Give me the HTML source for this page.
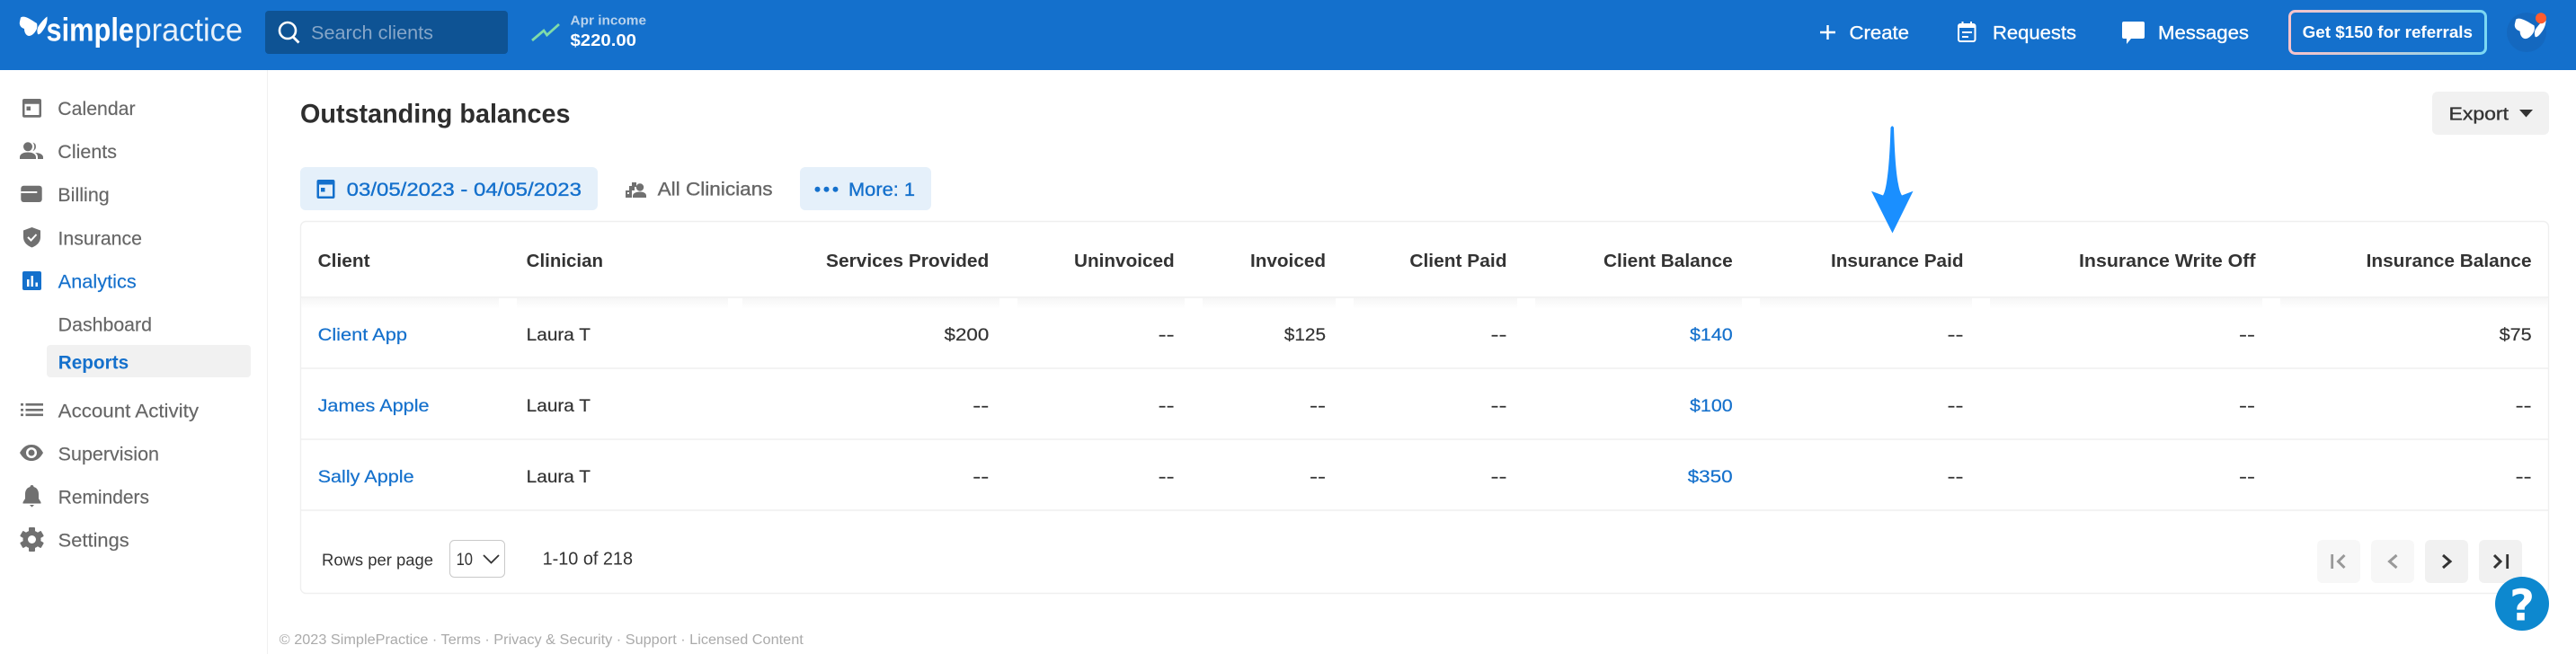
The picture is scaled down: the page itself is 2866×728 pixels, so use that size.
<!DOCTYPE html>
<html lang="en"><head><meta charset="utf-8"><title>Outstanding balances</title>
<style>
html,body{margin:0;padding:0;background:#fff;width:2866px;height:728px;overflow:hidden}
svg{display:block}
text{font-family:"Liberation Sans",Arial,sans-serif;font-size:20px;fill:#333}
.b{font-weight:700}
.m{stroke-width:.35px;paint-order:stroke}
.nav{font-size:21px;fill:#666;stroke:#666;stroke-width:.15px}
.th{font-weight:700;font-size:20px;fill:#333}
.td{font-size:19.5px;fill:#333;stroke:#333;stroke-width:.2px}
.blue{fill:#1470cc;stroke:#1470cc}
.w{fill:#fff;stroke:#fff}
.ic{fill:#707070}
</style></head><body>
<svg xmlns="http://www.w3.org/2000/svg" width="2866" height="728" viewBox="0 0 2866 728">
<defs>
<linearGradient id="ref" x1="0" x2="1" y1="0" y2="0"><stop offset="0" stop-color="#f6c3cb"/><stop offset=".5" stop-color="#c3cdd8"/><stop offset="1" stop-color="#7bd8f3"/></linearGradient>
<linearGradient id="sh" x1="0" x2="0" y1="0" y2="1"><stop offset="0" stop-color="#f6f6f6"/><stop offset="1" stop-color="#fff"/></linearGradient>
</defs>

<!-- top bar -->
<rect width="2866" height="78" fill="#1470cc"/>
<g fill="#fff">
<path d="M23 19.500C27 16.500 34 21.500 41 26C42 30 41 33 39 35.500C36.500 39 33 41 30.500 39.500C28 38 27 35 27 32C23.500 31 21 28 22 24Z"/>
<path d="M42 38C40.500 33 42 30 44 27.500C47 23.500 50 20 52.500 18.500C53 24 51 29.500 48 33.500C46 36.500 43.500 39 42 38Z"/>
</g>
<text x="51.500" y="45.700" textLength="97.500" lengthAdjust="spacingAndGlyphs" class="b" style="font-size:36px;fill:#fff">simple</text>
<text x="149.500" y="45.700" textLength="120.500" lengthAdjust="spacingAndGlyphs" style="font-size:36px;fill:#e8f1fa">practice</text>

<rect x="295" y="12" width="270" height="48" rx="4" fill="#0e5394"/>
<circle cx="320" cy="34" r="9" fill="none" stroke="#fff" stroke-width="2.600"/>
<path d="M326 41L332.500 47.500" stroke="#fff" stroke-width="2.800" fill="none"/>
<text x="346" y="43.500" textLength="136" lengthAdjust="spacingAndGlyphs" style="font-size:21px;fill:#86a6c8">Search clients</text>

<path d="M592 45L605 34L608.500 39L622 27" fill="none" stroke="#7fdca9" stroke-width="2.800"/>
<text x="634.500" y="27.500" textLength="84.500" lengthAdjust="spacingAndGlyphs" class="b" style="font-size:15px;fill:#b9d2ec">Apr income</text>
<text x="634.500" y="51" textLength="73.500" lengthAdjust="spacingAndGlyphs" class="b" style="font-size:18px;fill:#fff">$220.00</text>

<path d="M2025 36H2042M2033.500 28V44" stroke="#fff" stroke-width="2.400" fill="none"/>
<text x="2057.500" y="43.500" textLength="66.500" lengthAdjust="spacingAndGlyphs" class="m w" style="font-size:21px">Create</text>

<rect x="2179" y="27" width="18.500" height="19" rx="2" fill="none" stroke="#fff" stroke-width="2"/>
<path d="M2179 27h18.500v4h-18.500z" fill="#fff"/>
<path d="M2183.500 24v4M2193 24v4M2183 36h11M2183 41h7" stroke="#fff" stroke-width="2" fill="none"/>
<text x="2217" y="43.500" textLength="93" lengthAdjust="spacingAndGlyphs" class="m w" style="font-size:21px">Requests</text>

<path d="M2363 24h21a2 2 0 0 1 2 2v15a2 2 0 0 1-2 2h-13l-5 6v-6h-3a2 2 0 0 1-2-2v-15a2 2 0 0 1 2-2z" fill="#fff"/>
<text x="2401" y="43.500" textLength="101" lengthAdjust="spacingAndGlyphs" class="m w" style="font-size:21px">Messages</text>

<rect x="2547.500" y="12.500" width="218" height="47" rx="6" fill="none" stroke="url(#ref)" stroke-width="3"/>
<text x="2561.600" y="42" textLength="189.400" lengthAdjust="spacingAndGlyphs" class="b" style="font-size:18px;fill:#fff">Get $150 for referrals</text>

<circle cx="2811" cy="36" r="22" fill="#1468bf"/>
<g fill="#fff" transform="translate(2798 20) scale(1.130 1.050) translate(-22 -18)">
<path d="M23 19.500C27 16.500 34 21.500 41 26C42 30 41 33 39 35.500C36.500 39 33 41 30.500 39.500C28 38 27 35 27 32C23.500 31 21 28 22 24Z"/>
<path d="M42 38C40.500 33 42 30 44 27.500C47 23.500 50 20 52.500 18.500C53 24 51 29.500 48 33.500C46 36.500 43.500 39 42 38Z"/>
</g>
<circle cx="2827" cy="20.300" r="6" fill="#ff5c2e"/>

<!-- sidebar -->
<rect x="297" y="78" width="1" height="650" fill="#f0f0f0"/>
<rect x="52" y="384" width="227" height="36" rx="4" fill="#f1f1f1"/>

<path class="ic" fill-rule="evenodd" d="M27 110h17a2 2 0 0 1 2 2v16.700a2 2 0 0 1-2 2h-17a2 2 0 0 1-2-2V112a2 2 0 0 1 2-2zM27.500 115.700V128h16V115.700z"/>
<rect class="ic" x="29.500" y="118.500" width="4.500" height="4.500"/>
<path class="ic" d="M26 163.300a5 5 0 1 1 10 0a5 5 0 1 1-10 0zM22 177v-2C22 171 27 169.500 31 169.500S40 171 40 175v2zM36.500 158.500a5 5 0 0 1 0 9.500a7.500 7.500 0 0 0 0-9.500zM39 170C44 170 48 172 48 175v2h-6v-2C42 173 41 171 39 170z"/>
<rect class="ic" x="23.300" y="206.700" width="23.400" height="18.300" rx="3"/>
<rect x="23.300" y="213" width="18" height="2" fill="#fff"/>
<path class="ic" d="M35.500 253L45 256.500v7.500c0 5.500-4 9.500-9.500 11.500c-5.500-2-9.500-6-9.500-11.500v-7.500z"/>
<path d="M31 264l3.500 3.500l6-6.500" fill="none" stroke="#fff" stroke-width="2"/>
<rect x="25" y="302" width="21" height="21" rx="2" fill="#1470cc"/>
<path d="M30 311h2.500v8H30zM34.500 307h2.500v12h-2.500zM39.500 314.500h2.500v4.500h-2.500z" fill="#fff"/>
<path class="ic" d="M23 449h3v2.600h-3zM28.500 449H48v2.600H28.500zM23 455h3v2.600h-3zM28.500 455H48v2.600H28.500zM23 460.500h3v2.600h-3zM28.500 460.500H48v2.600H28.500z"/>
<path class="ic" d="M22 504C26 497 30 495 35 495S44 497 48 504C44 511 40 513 35 513S26 511 22 504Z"/>
<circle cx="35" cy="504" r="6" fill="#fff"/><circle cx="35" cy="504" r="3.500" fill="#707070"/>
<path class="ic" d="M35.500 540c1.300 0 2 1 2 2c4 1 5.500 4.500 5.500 8v5l2.500 4v1.500h-20v-1.500l2.500-4v-5c0-3.500 1.500-7 5.500-8c0-1 .7-2 2-2zM33 562h5l-2.500 2.500z"/>
<g class="ic">
<rect x="32" y="587" width="7" height="27" rx="1"/>
<rect x="32" y="587" width="7" height="27" rx="1" transform="rotate(60 35.500 600.500)"/>
<rect x="32" y="587" width="7" height="27" rx="1" transform="rotate(120 35.500 600.500)"/>
<circle cx="35.500" cy="600.500" r="10"/>
</g>
<circle cx="35.500" cy="600.500" r="4.500" fill="#fff"/>

<text class="nav" x="64.300" y="128" textLength="86.300" lengthAdjust="spacingAndGlyphs">Calendar</text>
<text class="nav" x="64.300" y="176" textLength="65.700" lengthAdjust="spacingAndGlyphs">Clients</text>
<text class="nav" x="64.300" y="224" textLength="57.500" lengthAdjust="spacingAndGlyphs">Billing</text>
<text class="nav" x="64.500" y="272.500" textLength="93.500" lengthAdjust="spacingAndGlyphs">Insurance</text>
<text class="nav blue m" x="64.700" y="320.500" textLength="87" lengthAdjust="spacingAndGlyphs">Analytics</text>
<text class="nav" x="64.700" y="368.300" textLength="104.300" lengthAdjust="spacingAndGlyphs">Dashboard</text>
<text class="nav b" style="fill:#1470cc;stroke:none" x="64.700" y="410.300" textLength="78.500" lengthAdjust="spacingAndGlyphs">Reports</text>
<text class="nav" x="64.700" y="464.300" textLength="156.300" lengthAdjust="spacingAndGlyphs">Account Activity</text>
<text class="nav" x="64.700" y="512.300" textLength="112.300" lengthAdjust="spacingAndGlyphs">Supervision</text>
<text class="nav" x="64.700" y="560.300" textLength="101.300" lengthAdjust="spacingAndGlyphs">Reminders</text>
<text class="nav" x="64.700" y="608.300" textLength="79" lengthAdjust="spacingAndGlyphs">Settings</text>

<!-- heading -->
<text x="334" y="136.500" textLength="300.500" lengthAdjust="spacingAndGlyphs" class="b" style="font-size:30px;fill:#2e2e2e">Outstanding balances</text>
<rect x="2706" y="102" width="130" height="48" rx="6" fill="#f1f1f1"/>
<text x="2724.500" y="133.500" textLength="66.500" lengthAdjust="spacingAndGlyphs" class="m" style="font-size:20px;stroke:#333">Export</text>
<path d="M2803 122h15l-7.500 8.500z" fill="#333"/>

<!-- filters -->
<rect x="334" y="186" width="331" height="48" rx="6" fill="#e5f0fa"/>
<path fill="#1470cc" fill-rule="evenodd" d="M354.500 200h16a2 2 0 0 1 2 2v17a2 2 0 0 1-2 2h-16a2 2 0 0 1-2-2v-17a2 2 0 0 1 2-2zM355 205.500V218.500h15V205.500z"/>
<rect x="357" y="209" width="4.500" height="4.500" fill="#1470cc"/>
<text x="385.700" y="218" textLength="261.300" lengthAdjust="spacingAndGlyphs" class="m blue" style="font-size:21px">03/05/2023 - 04/05/2023</text>

<path class="ic" d="M696 212h4v-5h3v-4h5v5h-2v4h-3v8h-7zM698 214v2h2v-2z"/>
<circle class="ic" cx="712" cy="208.500" r="4.200"/>
<path class="ic" d="M704 220v-2c0-3 4-4.500 8-4.500s7 1.500 7 4.500v2z"/>
<text x="731.600" y="217.700" textLength="128" lengthAdjust="spacingAndGlyphs" class="m" style="font-size:21px;fill:#666;stroke:#666">All Clinicians</text>

<rect x="890" y="186" width="146" height="48" rx="6" fill="#e5f0fa"/>
<circle cx="909.500" cy="210.700" r="3" fill="#1470cc"/><circle cx="919.500" cy="210.700" r="3" fill="#1470cc"/><circle cx="929.500" cy="210.700" r="3" fill="#1470cc"/>
<text x="944" y="218" textLength="74" lengthAdjust="spacingAndGlyphs" class="m blue" style="font-size:21px">More: 1</text>

<!-- card -->
<rect x="334.500" y="246.500" width="2501" height="414" rx="6" fill="#fff" stroke="#efefef" stroke-width="1.400"/>
<rect x="335.500" y="332" width="2499" height="12" fill="url(#sh)"/>
<g fill="#fff">
<rect x="555" y="332" width="20" height="12"/><rect x="810" y="332" width="16" height="12"/><rect x="1112" y="332" width="20" height="12"/><rect x="1318" y="332" width="20" height="12"/><rect x="1486" y="332" width="20" height="12"/><rect x="1688" y="332" width="20" height="12"/><rect x="1938" y="332" width="20" height="12"/><rect x="2194" y="332" width="20" height="12"/><rect x="2517" y="332" width="20" height="12"/>
</g>
<path d="M335 331H2835M335 410H2835M335 489H2835M335 568H2835" stroke="#efefef" stroke-width="1.400" fill="none"/>

<!-- table head -->
<text class="th" x="353.600" y="297" textLength="58" lengthAdjust="spacingAndGlyphs">Client</text>
<text class="th" x="585.700" y="297" textLength="85.300" lengthAdjust="spacingAndGlyphs">Clinician</text>
<text class="th" x="919" y="297" textLength="181.300" lengthAdjust="spacingAndGlyphs">Services Provided</text>
<text class="th" x="1195" y="297" textLength="111.700" lengthAdjust="spacingAndGlyphs">Uninvoiced</text>
<text class="th" x="1391" y="297" textLength="84" lengthAdjust="spacingAndGlyphs">Invoiced</text>
<text class="th" x="1568.400" y="297" textLength="108.100" lengthAdjust="spacingAndGlyphs">Client Paid</text>
<text class="th" x="1784" y="297" textLength="143.700" lengthAdjust="spacingAndGlyphs">Client Balance</text>
<text class="th" x="2037" y="297" textLength="147.500" lengthAdjust="spacingAndGlyphs">Insurance Paid</text>
<text class="th" x="2313" y="297" textLength="196.500" lengthAdjust="spacingAndGlyphs">Insurance Write Off</text>
<text class="th" x="2632.600" y="297" textLength="184" lengthAdjust="spacingAndGlyphs">Insurance Balance</text>

<!-- row 1 -->
<text class="td blue" x="353.600" y="379" textLength="99.400" lengthAdjust="spacingAndGlyphs">Client App</text>
<text class="td" x="585.700" y="379" textLength="71.300" lengthAdjust="spacingAndGlyphs">Laura T</text>
<text class="td" x="1050.500" y="379" textLength="49.800" lengthAdjust="spacingAndGlyphs">$200</text>
<text class="td" x="1288.700" y="379" textLength="18" lengthAdjust="spacingAndGlyphs">--</text>
<text class="td" x="1428.800" y="379" textLength="46.200" lengthAdjust="spacingAndGlyphs">$125</text>
<text class="td" x="1658.500" y="379" textLength="18" lengthAdjust="spacingAndGlyphs">--</text>
<text class="td blue" x="1880" y="379" textLength="47.700" lengthAdjust="spacingAndGlyphs">$140</text>
<text class="td" x="2166.500" y="379" textLength="18" lengthAdjust="spacingAndGlyphs">--</text>
<text class="td" x="2491" y="379" textLength="18" lengthAdjust="spacingAndGlyphs">--</text>
<text class="td" x="2780.600" y="379" textLength="36" lengthAdjust="spacingAndGlyphs">$75</text>

<!-- row 2 -->
<text class="td blue" x="353.600" y="458" textLength="124" lengthAdjust="spacingAndGlyphs">James Apple</text>
<text class="td" x="585.700" y="458" textLength="71.300" lengthAdjust="spacingAndGlyphs">Laura T</text>
<text class="td" x="1082.300" y="458" textLength="18" lengthAdjust="spacingAndGlyphs">--</text>
<text class="td" x="1288.700" y="458" textLength="18" lengthAdjust="spacingAndGlyphs">--</text>
<text class="td" x="1457" y="458" textLength="18" lengthAdjust="spacingAndGlyphs">--</text>
<text class="td" x="1658.500" y="458" textLength="18" lengthAdjust="spacingAndGlyphs">--</text>
<text class="td blue" x="1880" y="458" textLength="47.700" lengthAdjust="spacingAndGlyphs">$100</text>
<text class="td" x="2166.500" y="458" textLength="18" lengthAdjust="spacingAndGlyphs">--</text>
<text class="td" x="2491" y="458" textLength="18" lengthAdjust="spacingAndGlyphs">--</text>
<text class="td" x="2798.600" y="458" textLength="18" lengthAdjust="spacingAndGlyphs">--</text>

<!-- row 3 -->
<text class="td blue" x="353.600" y="537" textLength="107" lengthAdjust="spacingAndGlyphs">Sally Apple</text>
<text class="td" x="585.700" y="537" textLength="71.300" lengthAdjust="spacingAndGlyphs">Laura T</text>
<text class="td" x="1082.300" y="537" textLength="18" lengthAdjust="spacingAndGlyphs">--</text>
<text class="td" x="1288.700" y="537" textLength="18" lengthAdjust="spacingAndGlyphs">--</text>
<text class="td" x="1457" y="537" textLength="18" lengthAdjust="spacingAndGlyphs">--</text>
<text class="td" x="1658.500" y="537" textLength="18" lengthAdjust="spacingAndGlyphs">--</text>
<text class="td blue" x="1877.700" y="537" textLength="50" lengthAdjust="spacingAndGlyphs">$350</text>
<text class="td" x="2166.500" y="537" textLength="18" lengthAdjust="spacingAndGlyphs">--</text>
<text class="td" x="2491" y="537" textLength="18" lengthAdjust="spacingAndGlyphs">--</text>
<text class="td" x="2798.600" y="537" textLength="18" lengthAdjust="spacingAndGlyphs">--</text>

<!-- table footer -->
<text x="358" y="629.500" textLength="124" lengthAdjust="spacingAndGlyphs" style="font-size:18px">Rows per page</text>
<rect x="500.500" y="601.500" width="61" height="41" rx="5" fill="#fff" stroke="#c9c9c9" stroke-width="1"/>
<text x="507.600" y="629" textLength="18.400" lengthAdjust="spacingAndGlyphs" style="font-size:19px">10</text>
<path d="M538 618l8.500 8.500l8.500-8.500" fill="none" stroke="#333" stroke-width="1.800"/>
<text x="603.600" y="628.500" textLength="100.400" lengthAdjust="spacingAndGlyphs" style="font-size:20px">1-10 of 218</text>

<rect x="2578" y="601" width="48" height="48" rx="6" fill="#f7f7f7"/>
<rect x="2638" y="601" width="48" height="48" rx="6" fill="#f7f7f7"/>
<rect x="2698" y="601" width="48" height="48" rx="6" fill="#f1f1f1"/>
<rect x="2758" y="601" width="48" height="48" rx="6" fill="#f1f1f1"/>
<path d="M2594.700 617V633" stroke="#999" stroke-width="2.800" fill="none"/>
<path d="M2608.500 618L2601.500 625L2608.500 632" stroke="#999" stroke-width="3" fill="none"/>
<path d="M2666.500 618L2658.500 625L2666.500 632" stroke="#999" stroke-width="3" fill="none"/>
<path d="M2718 618L2726 625L2718 632" stroke="#333" stroke-width="3" fill="none"/>
<path d="M2775 618L2782 625L2775 632" stroke="#333" stroke-width="3" fill="none"/>
<path d="M2789.700 617V633" stroke="#333" stroke-width="2.800" fill="none"/>

<!-- arrow annotation -->
<path d="M2103.500 142Q2105.300 138.500 2107 142C2107.800 165 2109 190 2112 205C2113 211 2114.500 215 2116 217.500L2128.500 212.700L2105.500 259.500L2082 212.700L2095 217.500C2097 214 2098 209 2099 203C2101.500 188 2102.800 165 2103.500 142Z" fill="#1a8fff"/>

<!-- page footer -->
<text x="310.700" y="717" textLength="583.100" lengthAdjust="spacingAndGlyphs" style="font-size:15.500px;fill:#aaa">© 2023 SimplePractice · Terms · Privacy &amp; Security · Support · Licensed Content</text>

<!-- help -->
<circle cx="2806" cy="672" r="30" fill="#0d88cf"/>
<text x="2806" y="690.500" text-anchor="middle" style="font-family:'DejaVu Sans',sans-serif;font-weight:700;font-size:48px;fill:#fff">?</text>
</svg>
</body></html>
